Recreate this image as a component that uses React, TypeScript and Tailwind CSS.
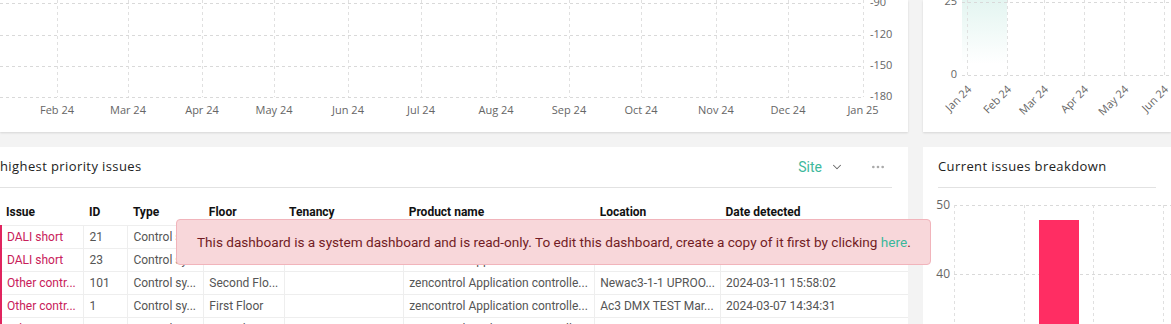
import { ChevronDown, Ellipsis } from "lucide-react";

const monthX = [57, 128, 202, 274, 348, 421, 496, 569, 641, 716, 788, 863];
const monthLabels = ["Feb 24", "Mar 24", "Apr 24", "May 24", "Jun 24", "Jul 24", "Aug 24", "Sep 24", "Oct 24", "Nov 24", "Dec 24", "Jan 25"];
const yLines = [3.5, 35.5, 66.5, 97.5];
const yLabels = ["-90", "-120", "-150", "-180"];

const chartFont = { fontFamily: "'Open Sans', 'Noto Sans', sans-serif", fontSize: 11 };

function TrendChart() {
  return (
    <svg width="908" height="132" className="block">
      {yLines.map((y) => (
        <line key={y} x1="0" x2="863" y1={y} y2={y} stroke="#d9d9d9" strokeDasharray="3 3" />
      ))}
      {monthX.map((x) => (
        <line key={x} x1={x + 0.5} x2={x + 0.5} y1="0" y2="97" stroke="#e0e0e0" strokeDasharray="3 3" />
      ))}
      {yLabels.map((t, i) => (
        <text key={t} x="870" y={yLines[i]} dominantBaseline="middle" fill="#666" style={chartFont}>
          {t}
        </text>
      ))}
      {monthLabels.map((t, i) => (
        <text key={t} x={monthX[i]} y="111" textAnchor="middle" dominantBaseline="middle" fill="#666" style={chartFont}>
          {t}
        </text>
      ))}
    </svg>
  );
}

const smallX = [44, 84, 121, 161, 201, 241];
const smallLabels = ["Jan 24", "Feb 24", "Mar 24", "Apr 24", "May 24", "Jun 24"];

function CountChart() {
  return (
    <svg width="248" height="132" className="block">
      <defs>
        <linearGradient id="fade" x1="0" y1="0" x2="0" y2="1">
          <stop offset="0" stopColor="#3bb89a" stopOpacity="0.14" />
          <stop offset="0.85" stopColor="#3bb89a" stopOpacity="0" />
        </linearGradient>
      </defs>
      <rect x="39" y="0" width="45" height="75" fill="url(#fade)" />
      {[2.5, 75.5].map((y) => (
        <line key={y} x1="39" x2="248" y1={y} y2={y} stroke="#d9d9d9" strokeDasharray="3 3" />
      ))}
      {smallX.map((x) => (
        <line key={x} x1={x + 0.5} x2={x + 0.5} y1="0" y2="75" stroke="#e0e0e0" strokeDasharray="3 3" />
      ))}
      <text x="34" y="2.5" textAnchor="end" dominantBaseline="middle" fill="#666" style={chartFont}>
        25
      </text>
      <text x="34" y="75.5" textAnchor="end" dominantBaseline="middle" fill="#666" style={chartFont}>
        0
      </text>
      {smallLabels.map((t, i) => (
        <text
          key={t}
          x={smallX[i] + 3}
          y="88"
          textAnchor="end"
          dominantBaseline="middle"
          fill="#666"
          transform={`rotate(-45 ${smallX[i] + 3} 88)`}
          style={chartFont}
        >
          {t}
        </text>
      ))}
    </svg>
  );
}

function BreakdownChart() {
  return (
    <svg width="248" height="137" className="block">
      {[17.5, 86.5].map((y) => (
        <line key={y} x1="31" x2="248" y1={y} y2={y} stroke="#d9d9d9" strokeDasharray="3 3" />
      ))}
      {[31, 101, 170, 240].map((x) => (
        <line key={x} x1={x + 0.5} x2={x + 0.5} y1="17" y2="137" stroke="#e0e0e0" strokeDasharray="3 3" />
      ))}
      <rect x="116" y="32" width="40" height="105" fill="#ff2d63" />
      <text x="27" y="17.5" textAnchor="end" dominantBaseline="middle" fill="#666" style={{ ...chartFont, fontSize: 12 }}>
        50
      </text>
      <text x="27" y="86.5" textAnchor="end" dominantBaseline="middle" fill="#666" style={{ ...chartFont, fontSize: 12 }}>
        40
      </text>
    </svg>
  );
}

const rows = [
  ["DALI short", "21", "Control sy...", "Ground Floor", "", "zencontrol Application controlle...", "Newac3-1-1 UPROO...", "2024-03-12 09:12:44"],
  ["DALI short", "23", "Control sy...", "Ground Floor", "", "zencontrol Application controlle...", "Newac3-1-1 UPROO...", "2024-03-12 09:12:44"],
  ["Other contr...", "101", "Control sy...", "Second Flo...", "", "zencontrol Application controlle...", "Newac3-1-1 UPROO...", "2024-03-11 15:58:02"],
  ["Other contr...", "1", "Control sy...", "First Floor", "", "zencontrol Application controlle...", "Ac3 DMX TEST Mar...", "2024-03-07 14:34:31"],
  ["Other contr...", "2", "Control sy...", "First Floor", "", "zencontrol Application controlle...", "AC3 DMX TEST M...", "2024-03-07 14:34:31"],
];

const headers = ["Issue", "ID", "Type", "Floor", "Tenancy", "Product name", "Location", "Date detected"];
const colW = ["w-[83px]", "w-[44px]", "w-[76px]", "w-[80px]", "w-[120px]", "w-[191px]", "w-[125px]", "w-[188px]"];

const titleFont = { fontFamily: "'Open Sans', 'Noto Sans', sans-serif" };

export default function App() {
  return (
    <div className="relative h-[324px] w-[1171px] overflow-hidden bg-[#f3f3f3] font-['Roboto',sans-serif]">
      <div className="grid grid-cols-[908px_248px] grid-rows-[132px_200px] gap-[15px]">
        <div className="bg-white shadow-[0_1px_2px_rgba(0,0,0,0.12)]">
          <TrendChart />
        </div>
        <div className="bg-white shadow-[0_1px_2px_rgba(0,0,0,0.12)]">
          <CountChart />
        </div>

        <div className="bg-white">
          <div className="mr-[16px] flex h-[41px] items-center justify-between border-b border-[#e2e2e2]">
            <span className="text-[13px] tracking-[0.4px] text-[#222]" style={titleFont}>
              highest priority issues
            </span>
            <div className="flex items-center">
              <span className="text-[14px] text-[#3db89b]">Site</span>
              <ChevronDown size={14} strokeWidth={1.75} className="ml-[8px] text-[#666]" />
              <Ellipsis size={16} className="ml-[26px] mr-[6px] text-[#aaa]" />
            </div>
          </div>
          <table className="mt-[12px] table-fixed border-collapse text-[12px]">
            <thead>
              <tr className="h-[25px] text-left">
                {headers.map((h, i) => (
                  <th key={h} className={`${colW[i]} px-[5px] font-bold text-[#111]`}>
                    {h}
                  </th>
                ))}
              </tr>
            </thead>
            <tbody>
              {rows.map((r, ri) => (
                <tr key={ri} className="h-[23px] border-t border-[#eeeeee]">
                  {r.map((c, ci) => (
                    <td
                      key={ci}
                      className={
                        ci === 0
                          ? "border-l-2 border-l-[#e0245e] px-[5px] text-[#c8205a] whitespace-nowrap"
                          : "border-l border-[#eeeeee] px-[5px] text-[#555] whitespace-nowrap"
                      }
                    >
                      {c}
                    </td>
                  ))}
                </tr>
              ))}
            </tbody>
          </table>
        </div>

        <div className="bg-white">
          <div className="mx-[15px] flex h-[41px] items-center border-b border-[#e2e2e2]">
            <span className="text-[13px] tracking-[0.4px] text-[#222]" style={titleFont}>
              Current issues breakdown
            </span>
          </div>
          <BreakdownChart />
        </div>
      </div>

      <div className="absolute left-[176px] top-[219px] flex h-[46px] w-[755px] items-center rounded-[4px] border border-[#f1b4bb] bg-[#f8d7da] pl-[20px] text-[13.6px] text-[#721c24]">
        <span className="whitespace-nowrap">
          This dashboard is a system dashboard and is read-only. To edit this dashboard, create a copy of it first by clicking{" "}
          <span className="text-[#3bb89a]">here</span>.
        </span>
      </div>
    </div>
  );
}
